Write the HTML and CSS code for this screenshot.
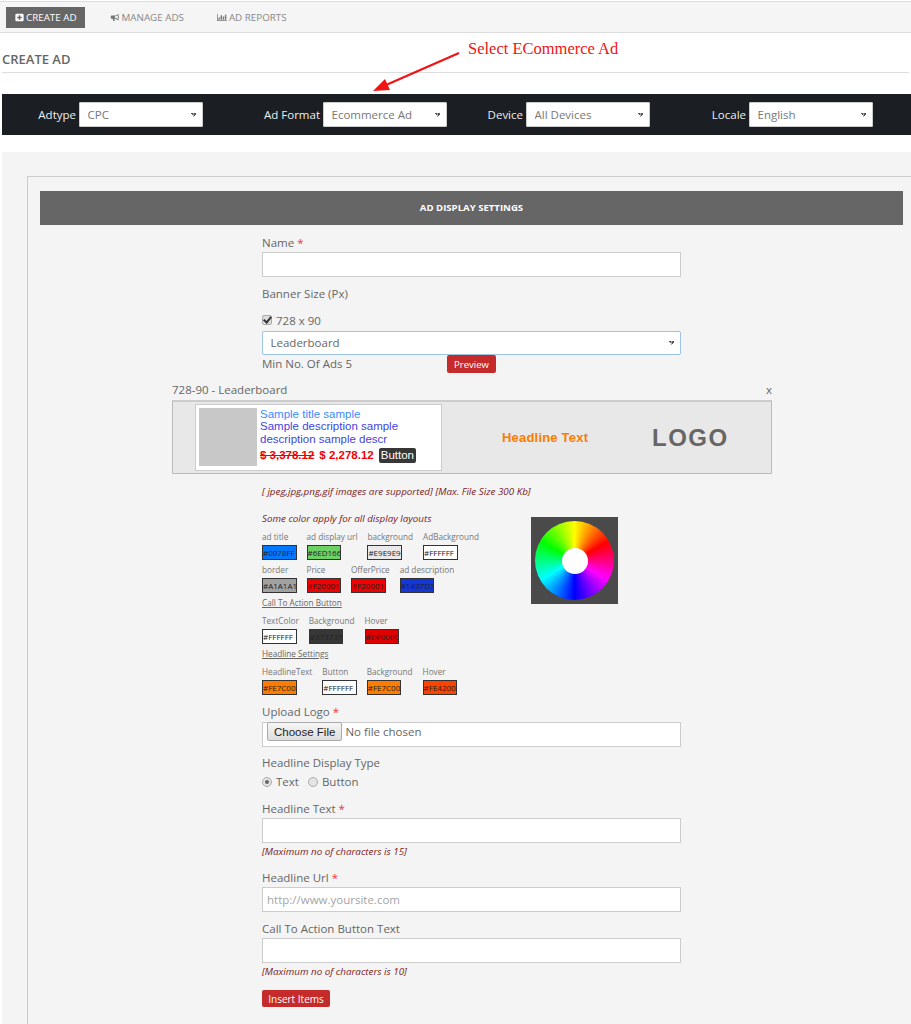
FILE: index.html
```html
<!DOCTYPE html>
<html lang="en">
<head>
    <meta charset="UTF-8">
    <meta name="viewport" content="width=device-width, initial-scale=1.0">
    <title>Create Ad</title>
    <link rel="stylesheet" href="styles.css">
</head>
<body>

    <!-- Top tabs -->
    <div class="tabs">
        <a class="tab active" href="#">
            <svg class="tab-icon" viewBox="0 0 12 12"><path fill="#fff" fill-rule="evenodd" d="M2 1h8a1.500 1.500 0 0 1 1.500 1.500v7A1.500 1.500 0 0 1 10 11H2A1.500 1.500 0 0 1 .5 9.500v-7A1.500 1.500 0 0 1 2 1zm3 2v2H3v2h2v2h2V7h2V5H7V3z"/></svg>
            CREATE AD
        </a>
        <a class="tab" href="#">
            <svg class="tab-icon wide" viewBox="0 0 14 12"><path fill="#777" fill-rule="evenodd" d="M12 1v3.200a1.500 1.500 0 0 1 0 2.600V10h-.8C9.800 8.700 8 8 6 7.800L6.900 11H4.600L3.700 7.700H2.500A1.500 1.500 0 0 1 1 6.200V4.800a1.500 1.500 0 0 1 1.500-1.500H6c2 0 3.800-.9 5.200-2.300zm-1 1.800C9.700 3.800 8.100 4.400 6.800 4.600v1.800c1.300.2 2.900.8 4.200 1.800z"/></svg>
            MANAGE ADS
        </a>
        <a class="tab" href="#">
            <svg class="tab-icon wide" viewBox="0 0 14 12"><path fill="#777" d="M0 1h1v9h13v1H0zM2 6h2v3H2zM5 3h2v6H5zM8 4.500h2V9H8zM11 2h2v7h-2z"/></svg>
            AD REPORTS
        </a>
    </div>

    <h1 class="page-title">CREATE AD</h1>

    <!-- Screenshot annotation -->
    <div class="note-text">Select ECommerce Ad</div>
    <svg class="note-arrow" width="100" height="50" viewBox="0 0 100 50">
        <path d="M97 3 L24 35" stroke="#f01414" stroke-width="2.200" fill="none"/>
        <path d="M11 41 L23 29 L28 40 Z" fill="#f01414"/>
    </svg>

    <!-- Filter bar -->
    <div class="filter-bar">
        <div class="filter filter-adtype">
            <label>Adtype</label>
            <select><option>CPC</option></select>
        </div>
        <div class="filter filter-format">
            <label>Ad Format</label>
            <select><option>Ecommerce Ad</option></select>
        </div>
        <div class="filter filter-device">
            <label>Device</label>
            <select><option>All Devices</option></select>
        </div>
        <div class="filter filter-locale">
            <label>Locale</label>
            <select><option>English</option></select>
        </div>
    </div>

    <div class="panel">
        <div class="box">
            <div class="box-title">AD DISPLAY SETTINGS</div>

            <div class="col name-field">
                <label class="field-label">Name <span class="req">*</span></label>
                <input class="text-input" type="text">
            </div>

            <div class="col banner-field">
                <label class="field-label">Banner Size (Px)</label>
                <div class="check-row">
                    <input class="check" type="checkbox" checked>
                    <span>728 x 90</span>
                </div>
                <select class="format-select"><option>Leaderboard</option></select>
                <div class="min-row">
                    <span class="min-text">Min No. Of Ads 5</span>
                    <button class="preview-btn">Preview</button>
                </div>
            </div>

            <!-- Banner preview -->
            <div class="preview">
                <div class="preview-head">
                    <span>728-90 - Leaderboard</span>
                    <span>x</span>
                </div>
                <div class="banner">
                    <div class="ad-card">
                        <div class="ad-thumb"></div>
                        <div class="ad-text">
                            <div class="ad-title">Sample title sample</div>
                            <div class="ad-desc">Sample description sample description sample descr</div>
                            <div class="ad-prices">
                                <span class="old-price">$ 3,378.12</span>
                                <span class="new-price">$ 2,278.12</span>
                                <span class="ad-btn">Button</span>
                            </div>
                        </div>
                    </div>
                    <div class="headline">Headline Text</div>
                    <div class="logo">LOGO</div>
                </div>
            </div>

            <div class="col">
                <p class="hint file-hint">[ jpeg,jpg,png,gif images are supported] [Max. File Size 300 Kb]</p>
            </div>

            <!-- Colour settings -->
            <div class="col colors">
                <div class="color-wheel"><div class="wheel"><div class="wheel-hole"></div></div></div>
                <p class="hint color-hint">Some color apply for all display layouts</p>

                <div class="swatch-row first">
                    <div class="swatch"><span>ad title</span><input value="#0078FF" style="background:#0078ff"></div>
                    <div class="swatch"><span>ad display url</span><input value="#6ED166" style="background:#6ed166"></div>
                    <div class="swatch"><span>background</span><input value="#E9E9E9" style="background:#e9e9e9"></div>
                    <div class="swatch"><span>AdBackground</span><input value="#FFFFFF" style="background:#ffffff"></div>
                </div>
                <div class="swatch-row">
                    <div class="swatch"><span>border</span><input value="#A1A1A1" style="background:#a1a1a1"></div>
                    <div class="swatch"><span>Price</span><input value="#F20001" style="background:#f20001"></div>
                    <div class="swatch"><span>OfferPrice</span><input value="#F20001" style="background:#f20001"></div>
                    <div class="swatch"><span>ad description</span><input value="#1437D7" style="background:#1437d7"></div>
                </div>
                <a class="color-link" href="#">Call To Action Button</a>
                <div class="swatch-row">
                    <div class="swatch"><span>TextColor</span><input value="#FFFFFF" style="background:#ffffff"></div>
                    <div class="swatch"><span>Background</span><input value="#373737" style="background:#373737"></div>
                    <div class="swatch"><span>Hover</span><input value="#DF0000" style="background:#df0000"></div>
                </div>
                <a class="color-link" href="#">Headline Settings</a>
                <div class="swatch-row">
                    <div class="swatch"><span>HeadlineText</span><input value="#FE7C00" style="background:#fe7c00"></div>
                    <div class="swatch"><span>Button</span><input value="#FFFFFF" style="background:#ffffff"></div>
                    <div class="swatch"><span>Background</span><input value="#FE7C00" style="background:#fe7c00"></div>
                    <div class="swatch"><span>Hover</span><input value="#FE4200" style="background:#fe4200"></div>
                </div>
            </div>

            <div class="col upload-field">
                <label class="field-label">Upload Logo <span class="req">*</span></label>
                <div class="file-wrap"><input type="file"></div>
            </div>

            <div class="col display-field">
                <label class="field-label">Headline Display Type</label>
                <div class="radio-row">
                    <input class="radio" type="radio" name="display" checked>
                    <span>Text</span>
                    <input class="radio" type="radio" name="display">
                    <span>Button</span>
                </div>
            </div>

            <div class="col headline-field">
                <label class="field-label">Headline Text <span class="req">*</span></label>
                <input class="text-input" type="text">
                <p class="hint limit">[Maximum no of characters is 15]</p>
            </div>

            <div class="col url-field">
                <label class="field-label">Headline Url <span class="req">*</span></label>
                <input class="text-input" type="text" placeholder="http://www.yoursite.com">
            </div>

            <div class="col cta-field">
                <label class="field-label">Call To Action Button Text</label>
                <input class="text-input" type="text">
                <p class="hint limit">[Maximum no of characters is 10]</p>
            </div>

            <div class="col">
                <button class="insert-btn">Insert Items</button>
            </div>
        </div>
    </div>

</body>
</html>
```

FILE: styles.css
```css
html {
    height: 1024px;
    overflow: hidden;
}

body {
    margin: 0;
    height: 1024px;
    overflow: hidden;
    font-family: 'Open Sans', sans-serif;
    font-size: 11.5px;
    background-color: #fff;
    color: #666;
    position: relative;
}

/* Top tabs */
.tabs {
    display: flex;
    align-items: center;
    height: 30px;
    margin-top: 1px;
    padding-left: 6px;
    background-color: #f5f5f5;
    border-top: 1px solid #ddd;
    border-bottom: 1px solid #ddd;
}

.tab {
    display: flex;
    align-items: center;
    gap: 2px;
    height: 21px;
    padding: 0 8px 0 9px;
    margin-right: 16px;
    font-size: 9.800px;
    color: #888;
    text-decoration: none;
}

.tab.active {
    background-color: #666;
    color: #fff;
}

.tab-icon {
    width: 9px;
    height: 9px;
}

.tab-icon.wide {
    width: 10px;
}

.page-title {
    margin: 0 2px;
    padding: 17px 0 4px;
    height: 18px;
    line-height: 18px;
    font-size: 13px;
    font-weight: 600;
    color: #666;
    border-bottom: 1px solid #ddd;
}

/* Annotation over the page */
.note-text {
    position: absolute;
    left: 468px;
    top: 39px;
    font-family: 'Liberation Serif', serif;
    font-size: 16.500px;
    color: #f01414;
}

.note-arrow {
    position: absolute;
    left: 362px;
    top: 50px;
}

/* Filter bar */
.filter-bar {
    display: flex;
    height: 41px;
    margin: 21px 0 17px 2px;
    background-color: #1b1e23;
}

.filter {
    display: flex;
    align-items: center;
    justify-content: flex-end;
    gap: 3px;
    color: #eee;
}

.filter-adtype { width: 201px; }
.filter-format { width: 244px; }
.filter-device { width: 203px; }
.filter-locale { width: 223px; }

/* Selects share a small drawn arrow */
.filter select,
.format-select {
    appearance: none;
    padding: 0 4px 0 7.500px;
    font-family: 'Open Sans', sans-serif;
    font-size: 11.500px;
    background-color: #fff;
    background-image: linear-gradient(to top right, transparent 50%, #555 50%), linear-gradient(to top left, transparent 50%, #555 50%);
    background-size: 2.500px 4px, 2.500px 4px;
    background-position: right 8.500px center, right 6px center;
    background-repeat: no-repeat;
}

.filter select {
    width: 124px;
    height: 25px;
    border: 1px solid #ccc;
    border-radius: 1px;
    color: #777;
}

/* Main panel */
.panel {
    box-sizing: border-box;
    margin-left: 2px;
    padding: 24px 0 0 25px;
    background-color: #f4f4f4;
    height: 872px;
    overflow: hidden;
}

.box {
    width: 880px;
    height: 880px;
    padding: 14px 0 0 12px;
    border: 1px solid #ccc;
}

.box-title {
    width: 863px;
    height: 34px;
    line-height: 34px;
    background-color: #666;
    color: #fff;
    font-size: 9.600px;
    font-weight: 700;
    text-align: center;
}

.col {
    margin-left: 222px;
    width: 419px;
}

.field-label {
    display: block;
    height: 17px;
    line-height: 15px;
}

.req {
    color: #e33;
}

.text-input {
    display: block;
    box-sizing: border-box;
    width: 100%;
    height: 25px;
    padding: 0 4px;
    border: 1px solid #ccc;
    background-color: #fff;
    font-family: 'Open Sans', sans-serif;
    font-size: 11.500px;
}

.text-input::placeholder {
    color: #a5a5a5;
}

.name-field {
    padding-top: 10px;
}

.banner-field {
    padding-top: 9px;
}

.check-row {
    display: flex;
    align-items: center;
    gap: 4px;
    height: 14px;
    margin-top: 10px;
    margin-bottom: 4px;
}

.check,
.radio {
    appearance: none;
    flex: none;
    margin: 0;
    width: 10px;
    height: 10px;
    background-color: #ddd;
    border: 1px solid #aaa;
    border-radius: 2px;
    position: relative;
}

.check:checked::after {
    content: "";
    position: absolute;
    left: 2px;
    top: -1px;
    width: 3px;
    height: 6px;
    border: solid #333;
    border-width: 0 2px 2px 0;
    transform: rotate(40deg);
}

.radio {
    border-radius: 50%;
    background-color: #e4e4e4;
}

.radio:checked::after {
    content: "";
    position: absolute;
    left: 2px;
    top: 2px;
    width: 4px;
    height: 4px;
    border-radius: 50%;
    background-color: #666;
}

.format-select {
    display: block;
    width: 100%;
    height: 24px;
    padding-bottom: 2px;
    border: 1px solid #9cc3e4;
    border-radius: 2px;
    color: #666;
}

.min-row {
    display: flex;
    align-items: center;
    height: 18px;
}

.min-text {
    width: 185px;
    margin-bottom: 2px;
}

.preview-btn {
    height: 18px;
    width: 49px;
    padding: 0;
    border: none;
    border-radius: 2px;
    background-color: #c62b2b;
    color: #fff;
    font-family: 'Open Sans', sans-serif;
    font-size: 9.500px;
}

/* Banner preview */
.preview {
    margin: 9px 0 0 132px;
    width: 600px;
}

.preview-head {
    display: flex;
    justify-content: space-between;
    height: 18px;
    line-height: 16px;
}

.banner {
    display: flex;
    align-items: center;
    box-sizing: border-box;
    height: 74px;
    background-color: #e8e8e8;
    border: 1px solid #bbb;
    border-top: 2px solid #ccc;
    padding-left: 22px;
    font-family: 'Liberation Sans', sans-serif;
}

.ad-card {
    display: flex;
    box-sizing: border-box;
    flex: none;
    width: 247px;
    height: 67px;
    padding: 3px;
    background-color: #fff;
    border: 1px solid #ccc;
}

.ad-thumb {
    flex: none;
    width: 58px;
    height: 58px;
    background-color: #c8c8c8;
}

.ad-text {
    margin-left: 3px;
    font-size: 11.500px;
    line-height: 12.300px;
}

.ad-title {
    color: #3c8cff;
}

.ad-desc {
    color: #4444dd;
}

.ad-prices {
    display: flex;
    align-items: center;
    gap: 5px;
    margin-top: 3px;
    font-weight: 700;
    color: #f20001;
}

.old-price {
    text-decoration: line-through;
}

.ad-btn {
    padding: 1px 2px 2px;
    border-radius: 2px;
    background-color: #373737;
    color: #fff;
    font-weight: 400;
}

.headline {
    width: 86px;
    margin-left: 60px;
    font-size: 13px;
    font-weight: 700;
    letter-spacing: .2px;
    color: #fe7c00;
    white-space: nowrap;
}

.logo {
    margin-left: 64px;
    font-size: 24px;
    font-weight: 700;
    letter-spacing: 1.500px;
    color: #666;
}

.hint {
    margin: 0;
    font-size: 9.800px;
    font-style: italic;
    color: #7a2020;
}

.file-hint {
    margin-top: 11px;
    line-height: 13px;
}

/* Colour settings */
.colors {
    position: relative;
    margin-top: 14px;
}

.color-wheel {
    position: absolute;
    left: 269px;
    top: 5px;
    display: flex;
    align-items: center;
    justify-content: center;
    width: 87px;
    height: 87px;
    background-color: #4a4a4a;
}

.wheel {
    display: flex;
    align-items: center;
    justify-content: center;
    width: 79px;
    height: 79px;
    border-radius: 50%;
    background: conic-gradient(#ff0, #f00 60deg, #f0f 120deg, #00f 180deg, #0ff 240deg, #0f0 300deg, #ff0);
}

.wheel-hole {
    width: 26px;
    height: 26px;
    border-radius: 50%;
    background-color: #fff;
}

.color-hint {
    height: 13px;
    line-height: 13px;
    margin-bottom: 7px;
}

.swatch-row {
    display: flex;
    gap: 10px;
}

.swatch-row.first {
    margin-bottom: 5px;
}

.swatch {
    display: flex;
    flex-direction: column;
    font-size: 8.200px;
    line-height: 10px;
    color: #777;
}

.swatch span {
    height: 13px;
    white-space: nowrap;
}

.swatch input {
    box-sizing: border-box;
    width: 34.500px;
    height: 15px;
    padding: 0;
    border: 1px solid #333;
    font-family: 'Open Sans', sans-serif;
    font-size: 8px;
    color: #222;
}

.color-link {
    display: block;
    height: 13px;
    line-height: 13px;
    margin: 3px 0 7px;
    font-size: 8.200px;
    color: #666;
}

/* Lower form */
.upload-field {
    padding-top: 9px;
}

.upload-field .field-label {
    margin-bottom: 1px;
}

.file-wrap {
    box-sizing: border-box;
    height: 25px;
    padding: 0 4px;
    background-color: #fff;
    border: 1px solid #ccc;
}

.file-wrap input {
    display: block;
    margin-top: -1px;
    font-family: 'Open Sans', sans-serif;
    font-size: 11.500px;
    color: #666;
}

.file-wrap input::file-selector-button {
    height: 19px;
    padding: 0 6px;
    margin-right: 3px;
    border: 1px solid #aaa;
    border-radius: 2px;
    background: linear-gradient(#f6f6f6, #dedede);
    color: #222;
    font-family: 'Liberation Sans', sans-serif;
    font-size: 11.500px;
}

.display-field {
    padding-top: 8px;
}

.radio-row {
    display: flex;
    align-items: center;
    gap: 4px;
    height: 19px;
}

.radio-row .radio + span + .radio {
    margin-left: 5px;
}

.headline-field {
    padding-top: 10px;
}

.limit {
    margin-top: 2px;
    line-height: 13px;
}

.url-field {
    padding-top: 12px;
}

.cta-field {
    padding-top: 9px;
}

.insert-btn {
    display: block;
    margin-top: 12px;
    width: 68px;
    height: 17px;
    padding: 0;
    border: none;
    border-radius: 2px;
    background-color: #c62b2b;
    color: #fff;
    font-family: 'Open Sans', sans-serif;
    font-size: 10px;
}
```
